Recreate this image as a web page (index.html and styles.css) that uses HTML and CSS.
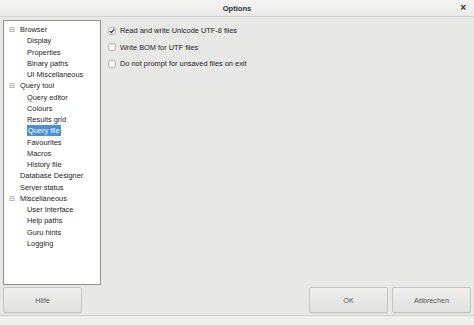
FILE: index.html
```html
<!DOCTYPE html>
<html lang="de">
<head>
    <meta charset="UTF-8">
    <title>Options</title>
    <link rel="stylesheet" href="styles.css">
</head>
<body>
    <div class="window">
        <div class="titlebar">
            <span class="title">Options</span>
            <span class="close">×</span>
        </div>

        <div class="main">
            <ul class="tree">
                <li class="node"><span class="exp">⊟</span>Browser</li>
                <li class="child">Display</li>
                <li class="child">Properties</li>
                <li class="child">Binary paths</li>
                <li class="child">UI Miscellaneous</li>
                <li class="node"><span class="exp">⊟</span>Query tool</li>
                <li class="child">Query editor</li>
                <li class="child">Colours</li>
                <li class="child">Results grid</li>
                <li class="child"><span class="selected">Query file</span></li>
                <li class="child">Favourites</li>
                <li class="child">Macros</li>
                <li class="child">History file</li>
                <li class="node leaf">Database Designer</li>
                <li class="node leaf">Server status</li>
                <li class="node"><span class="exp">⊟</span>Miscellaneous</li>
                <li class="child">User Interface</li>
                <li class="child">Help paths</li>
                <li class="child">Guru hints</li>
                <li class="child">Logging</li>
            </ul>

            <div class="page">
                <label class="check"><span class="box">
                    <svg width="8" height="8" viewBox="0 0 8 8"><path d="M1.2 4.2 L3.2 6.2 L6.8 1.6" fill="none" stroke="#333" stroke-width="1.5"/></svg>
                </span>Read and write Unicode UTF-8 files</label>
                <label class="check"><span class="box"></span>Write BOM for UTF files</label>
                <label class="check"><span class="box"></span>Do not prompt for unsaved files on exit</label>
            </div>
        </div>

        <div class="buttons">
            <button class="btn">Hilfe</button>
            <div class="spacer"></div>
            <button class="btn">OK</button>
            <button class="btn">Abbrechen</button>
        </div>

        <div class="statusbar"></div>
    </div>
</body>
</html>
```

FILE: styles.css
```css
body {
    margin: 0;
    font-family: 'Liberation Sans', 'DejaVu Sans', sans-serif;
    font-size: 7.4px;
    color: #1e2224;
    background-color: #e8e8e7;
}
.window {
    width: 474px;
    height: 325px;
    display: flex;
    flex-direction: column;
    overflow: hidden;
}
.titlebar {
    height: 17px;
    display: flex;
    align-items: center;
    justify-content: center;
    position: relative;
    background: linear-gradient(#f4f4f3, #ebebea);
    border-bottom: 1px solid #d3d3d1;
    box-sizing: border-box;
}
.title {
    font-weight: bold;
    font-size: 7.6px;
    color: #2e3436;
}
.close {
    position: absolute;
    right: 8px;
    top: 3px;
    font-size: 10px;
    font-weight: bold;
    line-height: 10px;
    color: #2e3436;
}
.main {
    display: flex;
    padding: 3px 3px 0 3px;
    height: 265px;
}
.tree {
    list-style: none;
    margin: 0;
    padding: 3px 0 0 0;
    width: 98px;
    box-sizing: border-box;
    background-color: #fff;
    border: 1px solid #8f908c;
}
.tree li {
    height: 11.26px;
    line-height: 11px;
    white-space: nowrap;
}
.node {
    padding-left: 5px;
}
.exp {
    display: inline-block;
    width: 11px;
    font-size: 7px;
    color: #888a85;
}
.leaf {
    padding-left: 16px;
}
.child {
    padding-left: 23px;
}
.selected {
    background-color: #4a90d9;
    color: #fff;
    padding: 1px 1px;
}
.page {
    flex: 1;
    padding: 6px 0 0 7px;
    display: flex;
    flex-direction: column;
    gap: 7.5px;
}
.check {
    display: flex;
    align-items: center;
    gap: 4px;
    height: 9px;
}
.box {
    width: 8px;
    height: 8px;
    box-sizing: border-box;
    border: 1px solid #b6b6b3;
    border-radius: 2px;
    background-color: #f5f5f4;
    display: flex;
    align-items: center;
    justify-content: center;
}
.box svg {
    display: block;
}
.buttons {
    display: flex;
    gap: 4px;
    padding: 2px 3px 0 3px;
    height: 28px;
    box-sizing: border-box;
}
.spacer {
    flex: 1;
}
.btn {
    width: 79px;
    height: 26px;
    font-family: inherit;
    font-size: 7.2px;
    color: #555753;
    border: 1px solid #c4c4c1;
    border-radius: 2px;
    background: linear-gradient(#f0f0ef, #e0e0de);
    box-shadow: 0 1px 0 rgba(0, 0, 0, 0.05);
}
.statusbar {
    margin-top: 2px;
    flex: 1;
    border-top: 1px solid #d0d0ce;
    background-color: #efefee;
}
```
